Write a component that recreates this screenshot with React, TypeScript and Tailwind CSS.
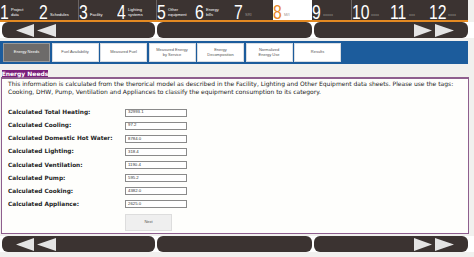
import React from "react";

const steps = [
  { n: "1", l: ["Project", "data"] },
  { n: "2", l: ["Schedules"] },
  { n: "3", l: ["Facility"] },
  { n: "4", l: ["Lighting", "systems"] },
  { n: "5", l: ["Other", "equipment"] },
  { n: "6", l: ["Energy", "bills"] },
  { n: "7", l: ["SRI"] },
  { n: "8", l: ["M/I"] },
  { n: "9", l: ["xxxxx"] },
  { n: "10", l: ["xxxx"] },
  { n: "11", l: ["xxx"] },
  { n: "12", l: ["xxxx"] },
];

const tabs = [
  ["Energy Needs"],
  ["Fuel Availability"],
  ["Measured Fuel"],
  ["Measured Energy", "by Service"],
  ["Energy", "Decomposition"],
  ["Normalized", "Energy Use"],
  ["Results"],
];

const rows = [
  ["Calculated Total Heating:", "32993.1"],
  ["Calculated Cooling:", "97.2"],
  ["Calculated Domestic Hot Water:", "8784.0"],
  ["Calculated Lighting:", "318.4"],
  ["Calculated Ventilation:", "1190.4"],
  ["Calculated Pump:", "595.2"],
  ["Calculated Cooking:", "4382.0"],
  ["Calculated Appliance:", "2625.0"],
];

function NavBar() {
  return (
    <div className="flex h-[16px] w-[468px] gap-[2px] pl-[2px]">
      <div className="flex h-full w-[153px] items-center rounded-[6px] bg-[#3b3331] pl-[14px]">
        <svg width="42" height="13" viewBox="0 0 42 13">
          <polygon points="0,6.5 18,0 18,13" fill="#e4e4e4" />
          <polygon points="21,6.5 40,0 40,13" fill="#e4e4e4" />
        </svg>
      </div>
      <div className="h-full w-[155px] rounded-[6px] bg-[#3b3331]" />
      <div className="flex h-full w-[154px] items-center justify-end rounded-[6px] bg-[#3b3331] pr-[13px]">
        <svg width="41" height="13" viewBox="0 0 41 13">
          <polygon points="0,0 18,6.5 0,13" fill="#e4e4e4" />
          <polygon points="21,0 40,6.5 21,13" fill="#e4e4e4" />
        </svg>
      </div>
    </div>
  );
}

export default function App() {
  return (
    <div
      className="relative h-[257px] w-[474px] overflow-hidden bg-[#f1f0ee]"
      style={{ fontFamily: "'DejaVu Sans', Verdana, sans-serif" }}
    >
      {/* step bar */}
      <div className="flex h-[20px] w-[468px] bg-[#3b3331]" style={{ fontFamily: "'Liberation Sans', Arial, sans-serif" }}>
        {steps.map((s, i) => {
          const active = s.n === "8";
          const sep = i === 2 || i === 4 || i === 9;
          const two = s.n.length > 1;
          return (
            <div
              key={s.n}
              className={
                "relative flex h-full w-[39px] items-start " +
                (active ? "bg-white " : "") +
                (sep ? "border-l border-[#6b6462] " : "")
              }
            >
              <div className={two ? "mt-[2px] h-[18px] w-[24px] shrink-0" : "mt-[2px] h-[18px] w-[12px] shrink-0"}>
                <span
                  className={
                    "inline-block h-[18px] origin-left scale-x-[0.75] text-[21px] leading-[18px] " +
                    (active ? "text-[#ea8a2a]" : "text-white")
                  }
                >
                  {s.n}
                </span>
              </div>
              <div
                className={
                  "mt-[6px] flex h-[11px] flex-col justify-end text-[4px] leading-[4.5px] " +
                  (two ? "-ml-[5px] " : "-ml-[1px] ") +
                  (i >= 6 ? "text-[#9a9390]" : "text-white")
                }
              >
                {s.l.map((t) => (
                  <span key={t} className="whitespace-nowrap">
                    {t}
                  </span>
                ))}
              </div>
            </div>
          );
        })}
      </div>
      <div className="h-[2px] w-[468px] bg-[#e48a22]" />
      <div className="bg-white">
        <NavBar />
      </div>

      {/* tab bar */}
      <div className="mt-[3px] flex h-[23px] w-[468px] items-start gap-[1.5px] bg-[#1c5c9c] pl-[3px] pt-[2px]" style={{ fontFamily: "'Liberation Sans', Arial, sans-serif" }}>
        {tabs.map((t, i) => (
          <div
            key={i}
            className={
              "flex h-[19px] w-[47px] flex-col items-center justify-center border text-center text-[4px] leading-[4.5px] " +
              (i === 0
                ? "border-[#9a9a9a] bg-[#6d6b6a] text-white"
                : "border-[#d8dde3] bg-white text-[#555]")
            }
          >
            {t.map((x) => (
              <span key={x} className="whitespace-nowrap">
                {x}
              </span>
            ))}
          </div>
        ))}
      </div>

      <div className="ml-[2px] mt-[6px] flex h-[7px] w-[46px] items-center justify-center bg-[#7b1f7b]">
        <span className="whitespace-nowrap text-[6px] font-bold leading-none text-white">Energy Needs</span>
      </div>

      {/* panel */}
      <div className="ml-[1px] h-[157px] w-[468px] border border-t-2 border-[#8e5e8e] bg-[#fefefc] pl-[6px] pt-[1px]">
        <p className="text-[6px] leading-[8px] text-[#222]">
          This information is calculated from the therorical model as described in the Facility, Lighting and Other Equipment data sheets. Please use the tags:
          <br />
          Cooking, DHW, Pump, Ventilation and Appliances to classify the equipment consumption to its category.
        </p>
        <div className="mt-[10px] flex flex-col">
          {rows.map(([l, v]) => (
            <div key={l} className="flex h-[13.1px] items-center">
              <div className="w-[117px] whitespace-nowrap text-[5.8px] font-bold text-[#1e1e1e]">{l}</div>
              <div
                className="flex h-[8px] w-[62px] items-center border border-[#8a8a8a] bg-white pl-[2px] text-[4.3px] text-[#333]"
                style={{ fontFamily: "'Liberation Sans', Arial, sans-serif" }}
              >
                {v}
              </div>
            </div>
          ))}
        </div>
        <div
          className="ml-[117px] mt-[3px] flex h-[17px] w-[47px] items-center justify-center border border-[#dddddd] bg-[#efefef] text-[4px] text-[#555]"
          style={{ fontFamily: "'Liberation Sans', Arial, sans-serif" }}
        >
          Next
        </div>
      </div>

      <div className="mt-[2px] bg-white">
        <NavBar />
      </div>
    </div>
  );
}
